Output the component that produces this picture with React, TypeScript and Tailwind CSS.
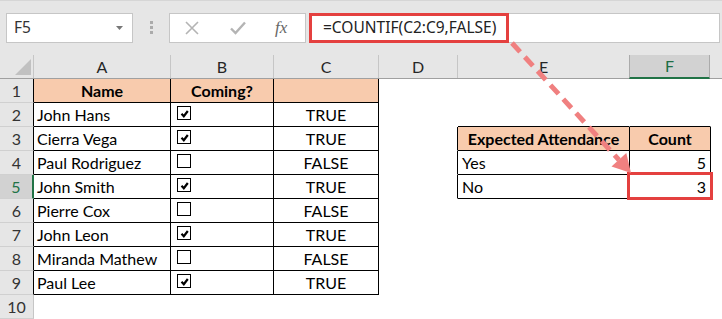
// Excel-style COUNTIF example sheet
const cellFont = "font-['Lato','Liberation_Sans',sans-serif]"
const uiFont = "font-['Noto_Sans','Open_Sans',sans-serif]"

const people = [
  { name: 'John Hans', coming: true },
  { name: 'Cierra Vega', coming: true },
  { name: 'Paul Rodriguez', coming: false },
  { name: 'John Smith', coming: true },
  { name: 'Pierre Cox', coming: false },
  { name: 'John Leon', coming: true },
  { name: 'Miranda Mathew', coming: false },
  { name: 'Paul Lee', coming: true },
]

const columns = [
  { key: 'A', w: 'w-[137px]' },
  { key: 'B', w: 'w-[103px]' },
  { key: 'C', w: 'w-[105px]' },
  { key: 'D', w: 'w-[79px]' },
  { key: 'E', w: 'w-[172px]' },
  { key: 'F', w: 'w-[81px]' },
]

function CheckBox({ checked }: { checked: boolean }) {
  return (
    <div className="w-[14px] h-[14px] border border-black bg-white flex items-center justify-center mt-[3px] self-start">
      {checked && (
        <svg width="9" height="9" viewBox="0 0 9 9">
          <path d="M1.5 4.8 L3.8 7.2 L7.8 2" fill="none" stroke="#000" strokeWidth="2.2" />
        </svg>
      )}
    </div>
  )
}

// one sheet row: row number + cells A..G
function SheetRow({ n, children }: { n: number; children?: React.ReactNode }) {
  const selected = n === 5
  const inTable = n <= 9
  return (
    <div className="flex h-[24px]">
      <div
        className={`w-[34px] shrink-0 flex items-center justify-center border-b border-b-[#d0d0d0] text-[16px] ${
          selected
            ? 'bg-[#d2d2d2] text-[#217346] border-r-2 border-r-[#217346]'
            : `bg-[#e6e6e6] text-[#333] border-r ${inTable ? 'border-r-black' : 'border-r-[#c6c6c6]'}`
        }`}
      >
        {n}
      </div>
      {children}
    </div>
  )
}

function Cell({
  w,
  r = false,
  b = false,
  className = '',
  children,
}: {
  w: string
  r?: boolean
  b?: boolean
  className?: string
  children?: React.ReactNode
}) {
  return (
    <div
      className={`${w} shrink-0 h-full flex items-center border-r border-b text-[16px] text-black ${
        r ? 'border-r-black' : 'border-r-transparent'
      } ${b ? 'border-b-black' : 'border-b-transparent'} ${className}`}
    >
      {children}
    </div>
  )
}

export default function App() {
  return (
    <div className={`relative w-[722px] h-[319px] overflow-hidden bg-white ${cellFont}`}>
      {/* 编辑栏 */}
      <div className="h-[55px] bg-[#e6e6e6] border-t border-[#d6d6d6] flex items-start pt-[12px] pl-[6px]">
        <div className={`w-[127px] h-[30px] bg-white border border-[#c6c6c6] flex items-center pl-[7px] pr-[9px] ${uiFont}`}>
          <span className="text-[15.5px] text-[#333] flex-1">F5</span>
          <svg width="7" height="4" viewBox="0 0 7 4">
            <path d="M0 0 H7 L3.5 4 Z" fill="#777" />
          </svg>
        </div>
        <div className="ml-[17px] mt-[8px] flex flex-col gap-[2px]">
          <div className="w-[3px] h-[3px] bg-[#ababab]" />
          <div className="w-[3px] h-[3px] bg-[#ababab]" />
          <div className="w-[3px] h-[3px] bg-[#ababab]" />
        </div>
        <div className="ml-[16px] w-[137px] h-[30px] bg-white border border-[#c6c6c6] flex items-center pl-[15px]">
          <svg width="14" height="14" viewBox="0 0 14 14">
            <path d="M1 1 L13 13 M13 1 L1 13" stroke="#b4b4b4" strokeWidth="1.6" />
          </svg>
          <svg width="16" height="14" viewBox="0 0 16 14" className="ml-[31px]">
            <path d="M1 7.5 L5.5 12 L15 1.5" fill="none" stroke="#b4b4b4" strokeWidth="2.4" />
          </svg>
          <span className="ml-[29px] font-['Liberation_Serif',serif] italic text-[17px] text-[#666]">fx</span>
        </div>
        <div className={`ml-[3px] mr-[2px] flex-1 flex h-[30px] ${uiFont}`}>
          <div className="w-[200px] h-full border-[3px] border-[#e4403f] bg-white flex items-center pl-[11px] text-[15.5px] text-[#222]">
            =COUNTIF(C2:C9,FALSE)
          </div>
          <div className="flex-1 h-full bg-white border-y border-r border-[#c6c6c6]" />
        </div>
      </div>

      {/* 列标题 */}
      <div className="flex h-[24px] bg-[#e6e6e6] border-b border-[#a0a0a0] text-[16px] text-[#262626]">
        <div className="w-[34px] shrink-0 border-r border-[#c6c6c6] flex items-end justify-end pr-[2px] pb-[3px]">
          <svg width="16" height="16" viewBox="0 0 16 16">
            <path d="M16 0 V16 H0 Z" fill="#c1c1c1" />
          </svg>
        </div>
        {columns.map((c) => (
          <div
            key={c.key}
            className={`${c.w} shrink-0 flex items-center justify-center border-r ${
              c.key === 'F'
                ? 'bg-[#d2d2d2] text-[#1e6e45] border-r-[#ababab] border-l border-l-[#ababab] -ml-px border-b-2 border-b-[#217346] -mb-px'
                : 'border-r-[#c6c6c6]'
            }`}
          >
            {c.key}
          </div>
        ))}
      </div>

      {/* 表格 */}
      <SheetRow n={1}>
        <Cell w="w-[137px]" r b className="justify-center font-bold bg-[#f8cbad]">Name</Cell>
        <Cell w="w-[103px]" r b className="justify-center font-bold bg-[#f8cbad]">Coming?</Cell>
        <Cell w="w-[105px]" r b className="bg-[#f8cbad]" />
      </SheetRow>
      {people.map((p, i) => {
        const n = i + 2
        const inSummary = n >= 3 && n <= 5
        return (
          <SheetRow key={p.name} n={n}>
            <Cell w="w-[137px]" r b className="pl-[3px]">{p.name}</Cell>
            <Cell w="w-[103px]" r b className="pl-[6px]">
              <CheckBox checked={p.coming} />
            </Cell>
            <Cell w="w-[105px]" r b className="justify-center">{p.coming ? 'TRUE' : 'FALSE'}</Cell>
            <Cell w="w-[79px]" r={inSummary} />
            {n === 2 && (
              <>
                <Cell w="w-[172px]" b />
                <Cell w="w-[81px]" b />
              </>
            )}
            {n === 3 && (
              <>
                <Cell w="w-[172px]" r b className="justify-center font-bold bg-[#f8cbad]">Expected Attendance</Cell>
                <Cell w="w-[81px]" r b className="justify-center font-bold bg-[#f8cbad]">Count</Cell>
              </>
            )}
            {n === 4 && (
              <>
                <Cell w="w-[172px]" r b className="pl-[4px]">Yes</Cell>
                <Cell w="w-[81px]" r b className="justify-end pr-[4px]">5</Cell>
              </>
            )}
            {n === 5 && (
              <>
                <Cell w="w-[172px]" r b className="pl-[4px]">No</Cell>
                <Cell w="w-[81px]" r b className="relative justify-end pr-[4px]">
                  3
                  <div className="absolute -left-[3px] -top-[3px] w-[86px] h-[28px] border-[3px] border-[#e4403f] z-10" />
                </Cell>
              </>
            )}
          </SheetRow>
        )
      })}
      <SheetRow n={10} />

      {/* 箭头 */}
      <svg className="absolute inset-0 z-20 pointer-events-none" width="722" height="319" viewBox="0 0 722 319">
        <line x1="512" y1="43" x2="619" y2="160" stroke="#f08080" strokeWidth="5" strokeDasharray="12 7" />
        <path d="M631 173 L611.5 166.4 L626.3 153 Z" fill="#f08080" />
      </svg>
    </div>
  )
}
